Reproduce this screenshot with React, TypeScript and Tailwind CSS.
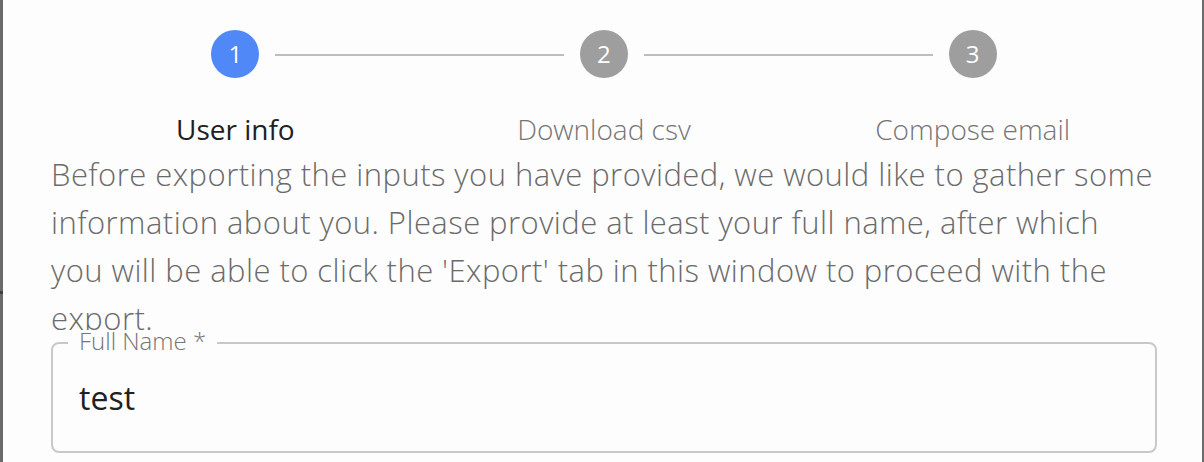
import React from "react";

const steps = [
  { n: 1, label: "User info", active: true },
  { n: 2, label: "Download csv", active: false },
  { n: 3, label: "Compose email", active: false },
];

export default function App() {
  return (
    <div
      className="flex w-[1204px] h-[462px] overflow-hidden bg-white"
      style={{ fontFamily: "'Open Sans', 'Noto Sans', sans-serif" }}
    >
      <div className="w-[3px] shrink-0 bg-[#6b6b6b] flex flex-col">
        <div className="h-[291px]" />
        <div className="h-[3px] bg-[#3f3f3f]" />
      </div>
      <div className="flex-1 bg-[#fdfdfd] pl-[48px] pr-[45px]">
        <div className="grid grid-cols-3 pt-[30px]">
          {steps.map((s, i) => (
            <div key={s.n} className="relative flex flex-col items-center">
              {i > 0 && (
                <div className="absolute top-[24px] left-[calc(-50%+40px)] right-[calc(50%+40px)] h-[2px] bg-[#bdbdbd]" />
              )}
              <div
                className={`w-12 h-12 rounded-full flex items-center justify-center text-white text-[24px] leading-none ${
                  s.active ? "bg-[#5088f8]" : "bg-[#9e9e9e]"
                }`}
              >
                {s.n}
              </div>
              <div
                className={`mt-[31px] text-[28px] leading-[40px] ${
                  s.active ? "text-[#212121] font-normal" : "text-[#757575] font-light"
                }`}
              >
                {s.label}
              </div>
            </div>
          ))}
        </div>
        <p className="mt-[1px] text-[31px] tracking-[0.45px] leading-[48px] font-light text-[#6b6b6b] whitespace-nowrap">
          Before exporting the inputs you have provided, we would like to gather some
          <br />
          information about you. Please provide at least your full name, after which
          <br />
          you will be able to click the 'Export' tab in this window to proceed with the
          <br />
          export.
        </p>
        <div className="relative h-[111px] border-2 border-[#c8c8c8] rounded-[8px] flex items-center pl-[26px]">
          <span className="absolute -top-[14px] left-[15px] bg-[#fdfdfd] px-[11px] text-[24px] leading-[22px] font-light text-[#757575]">
            Full Name *
          </span>
          <span className="text-[32px] leading-[48px] text-[#212121]">test</span>
        </div>
      </div>
      <div className="w-[2px] shrink-0 bg-[#6b6b6b]" />
    </div>
  );
}
